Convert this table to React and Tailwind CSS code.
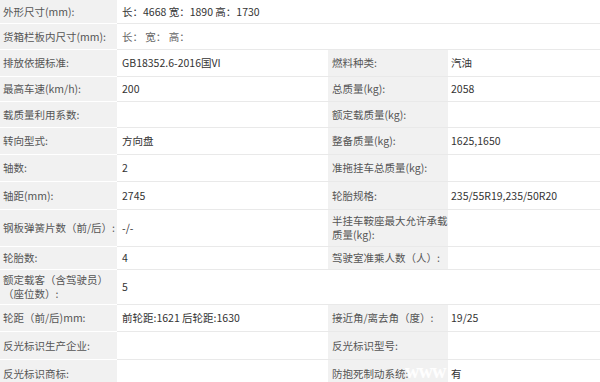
import React from "react";

// Vehicle spec table (公告参数)
const rows = [
    { h: "h-[24px]", label: "外形尺寸(mm):", value: "长：4668 宽：1890 高：1730", wide: true },
    { h: "h-[26px]", label: "货箱栏板内尺寸(mm):", value: "长：  宽：  高：", wide: true, muted: true },
    { h: "h-[27px]", label: "排放依据标准:", value: "GB18352.6-2016国VI", label2: "燃料种类:", value2: "汽油" },
    { h: "h-[25px]", label: "最高车速(km/h):", value: "200", label2: "总质量(kg):", value2: "2058" },
    { h: "h-[26px]", label: "载质量利用系数:", value: "", label2: "额定载质量(kg):", value2: "" },
    { h: "h-[27px]", label: "转向型式:", value: "方向盘", label2: "整备质量(kg):", value2: "1625,1650" },
    { h: "h-[27px]", label: "轴数:", value: "2", label2: "准拖挂车总质量(kg):", value2: "" },
    { h: "h-[28px]", label: "轴距(mm):", value: "2745", label2: "轮胎规格:", value2: "235/55R19,235/50R20" },
    { h: "h-[37px]", label: "钢板弹簧片数（前/后）:", value: "-/-", label2: <>半挂车鞍座最大允许承载<br />质量(kg):</>, value2: "" },
    { h: "h-[23px]", label: "轮胎数:", value: "4", label2: "驾驶室准乘人数（人）:", value2: "" },
    { h: "h-[35px]", label: <>额定载客（含驾驶员）<br />（座位数）:</>, value: "5", wide: true },
    { h: "h-[27px]", label: "轮距（前/后)mm:", value: "前轮距:1621 后轮距:1630", label2: "接近角/离去角（度）:", value2: "19/25" },
    { h: "h-[28px]", label: "反光标识生产企业:", value: "", label2: "反光标识型号:", value2: "" },
    { h: "h-[28px]", label: "反光标识商标:", value: "", label2: "防抱死制动系统:", value2: "有" },
];

const Label = ({ children, className = "" }) => (
    <div className={`bg-[#f1f1f1] text-[#555] flex items-center leading-[14px] ${className}`}>
        {children}
    </div>
);

export default function App() {
    return (
        <div
            className="relative w-[600px] h-[382px] overflow-hidden bg-white text-[10.5px]"
            style={{ fontFamily: '"Noto Sans CJK SC", "Noto Sans", sans-serif' }}
        >
            {rows.map((r, i) => (
                <div
                    key={i}
                    className={`grid grid-cols-[117px_211px_120px_1fr] ${r.h} border-b border-[#e9e9e9]`}
                >
                    <Label className="pl-[3px] border-b border-white -mb-px">{r.label}</Label>
                    {r.wide ? (
                        <div className={`col-span-3 flex items-center pl-[5px] ${r.muted ? "text-[#666]" : "text-[#333]"}`}>
                            {r.value}
                        </div>
                    ) : (
                        <>
                            <div className="flex items-center pl-[5px] text-[#333]">{r.value}</div>
                            <Label className="pl-[4px]">{r.label2}</Label>
                            <div className="flex items-center pl-[3px] text-[#333]">{r.value2}</div>
                        </>
                    )}
                </div>
            ))}

            {/* watermark */}
            <div
                className="absolute left-[405px] top-[361px] text-[20px] leading-[20px] font-bold text-white/90 tracking-[-1px]"
                style={{ fontFamily: '"Liberation Serif", serif' }}
            >
                www
            </div>
        </div>
    );
}
